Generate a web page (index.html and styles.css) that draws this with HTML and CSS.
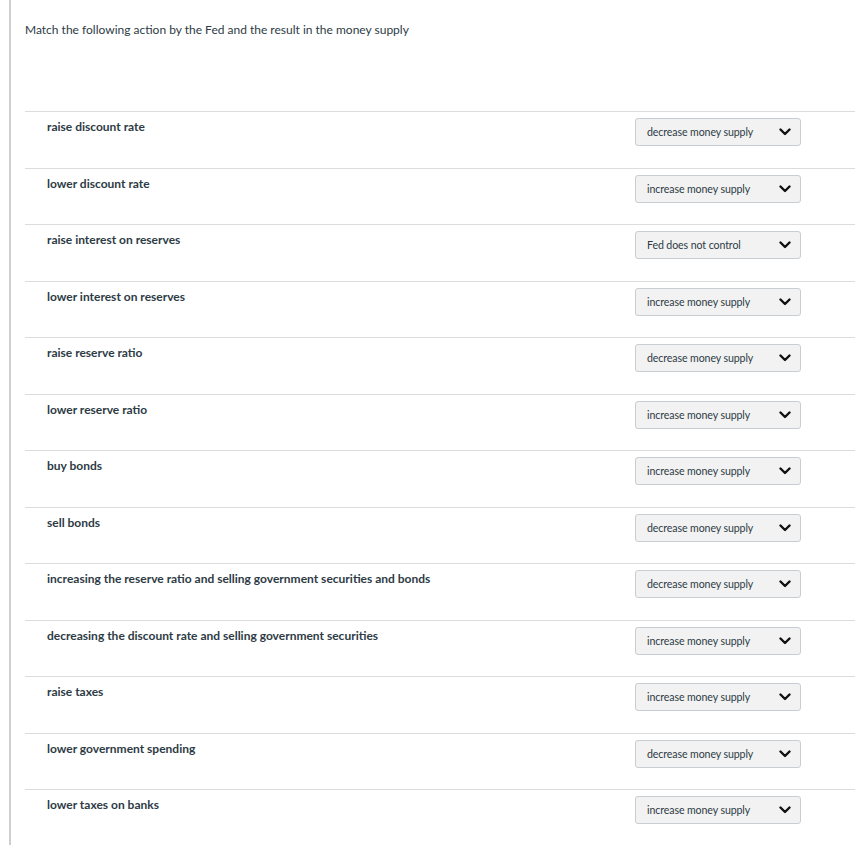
FILE: index.html
```html
<!DOCTYPE html>
<html>
<head>
<meta charset="utf-8">
<link rel="stylesheet" href="styles.css">
</head>
<body>
<div class="page">
  <div class="question">
    <p class="prompt">Match the following action by the Fed and the result in the money supply</p>
    <div class="list">
      <div class="row"><div class="label">raise discount rate</div><div class="select"><span>decrease money supply</span><svg class="chev" viewBox="0 0 12 8"><path d="M1.5 1.5 L6 6 L10.5 1.5"/></svg></div></div>
      <div class="row"><div class="label">lower discount rate</div><div class="select"><span>increase money supply</span><svg class="chev" viewBox="0 0 12 8"><path d="M1.5 1.5 L6 6 L10.5 1.5"/></svg></div></div>
      <div class="row"><div class="label">raise interest on reserves</div><div class="select"><span>Fed does not control</span><svg class="chev" viewBox="0 0 12 8"><path d="M1.5 1.5 L6 6 L10.5 1.5"/></svg></div></div>
      <div class="row"><div class="label">lower interest on reserves</div><div class="select"><span>increase money supply</span><svg class="chev" viewBox="0 0 12 8"><path d="M1.5 1.5 L6 6 L10.5 1.5"/></svg></div></div>
      <div class="row"><div class="label">raise reserve ratio</div><div class="select"><span>decrease money supply</span><svg class="chev" viewBox="0 0 12 8"><path d="M1.5 1.5 L6 6 L10.5 1.5"/></svg></div></div>
      <div class="row"><div class="label">lower reserve ratio</div><div class="select"><span>increase money supply</span><svg class="chev" viewBox="0 0 12 8"><path d="M1.5 1.5 L6 6 L10.5 1.5"/></svg></div></div>
      <div class="row"><div class="label">buy bonds</div><div class="select"><span>increase money supply</span><svg class="chev" viewBox="0 0 12 8"><path d="M1.5 1.5 L6 6 L10.5 1.5"/></svg></div></div>
      <div class="row"><div class="label">sell bonds</div><div class="select"><span>decrease money supply</span><svg class="chev" viewBox="0 0 12 8"><path d="M1.5 1.5 L6 6 L10.5 1.5"/></svg></div></div>
      <div class="row"><div class="label">increasing the reserve ratio and selling government securities and bonds</div><div class="select"><span>decrease money supply</span><svg class="chev" viewBox="0 0 12 8"><path d="M1.5 1.5 L6 6 L10.5 1.5"/></svg></div></div>
      <div class="row"><div class="label">decreasing the discount rate and selling government securities</div><div class="select"><span>increase money supply</span><svg class="chev" viewBox="0 0 12 8"><path d="M1.5 1.5 L6 6 L10.5 1.5"/></svg></div></div>
      <div class="row"><div class="label">raise taxes</div><div class="select"><span>increase money supply</span><svg class="chev" viewBox="0 0 12 8"><path d="M1.5 1.5 L6 6 L10.5 1.5"/></svg></div></div>
      <div class="row"><div class="label">lower government spending</div><div class="select"><span>decrease money supply</span><svg class="chev" viewBox="0 0 12 8"><path d="M1.5 1.5 L6 6 L10.5 1.5"/></svg></div></div>
      <div class="row"><div class="label">lower taxes on banks</div><div class="select"><span>increase money supply</span><svg class="chev" viewBox="0 0 12 8"><path d="M1.5 1.5 L6 6 L10.5 1.5"/></svg></div></div>
    </div>
  </div>
</div>
</body>
</html>
```

FILE: styles.css
```css
html, body {
  margin: 0;
  padding: 0;
  background: #ffffff;
}

body {
  font-family: Lato, "Liberation Sans", sans-serif;
  color: #2d3b45;
  overflow: hidden;
}

.page {
  margin-left: 9px;
  border-left: 2px solid #cfcfcf;
  min-height: 845px;
}

.question {
  padding-left: 14px;
}

.prompt {
  margin: 0;
  padding-top: 22px;
  font-size: 12px;
  line-height: 16px;
  height: 89px;
}

.list {
  display: flex;
  flex-direction: column;
}

.row {
  display: flex;
  align-items: flex-start;
  border-top: 1px solid #dcdcdc;
  height: 55.5px;
}

.label {
  flex: 1;
  padding-left: 22px;
  padding-top: 8px;
  font-size: 12px;
  font-weight: bold;
  line-height: 14px;
}

.select {
  margin-top: 6px;
  margin-right: 54px;
  width: 164px;
  height: 26px;
  box-sizing: content-box;
  border: 1px solid #c7cdd1;
  border-radius: 3px;
  background: #f2f2f2;
  display: flex;
  align-items: center;
  justify-content: space-between;
}

.select span {
  padding-left: 11px;
  font-size: 10.6px;
  color: #2d3b45;
  letter-spacing: -0.1px;
}

.chev {
  width: 12px;
  height: 8px;
  margin-right: 9px;
  fill: none;
  stroke: #111;
  stroke-width: 2.4;
  stroke-linecap: round;
  stroke-linejoin: round;
}
```
